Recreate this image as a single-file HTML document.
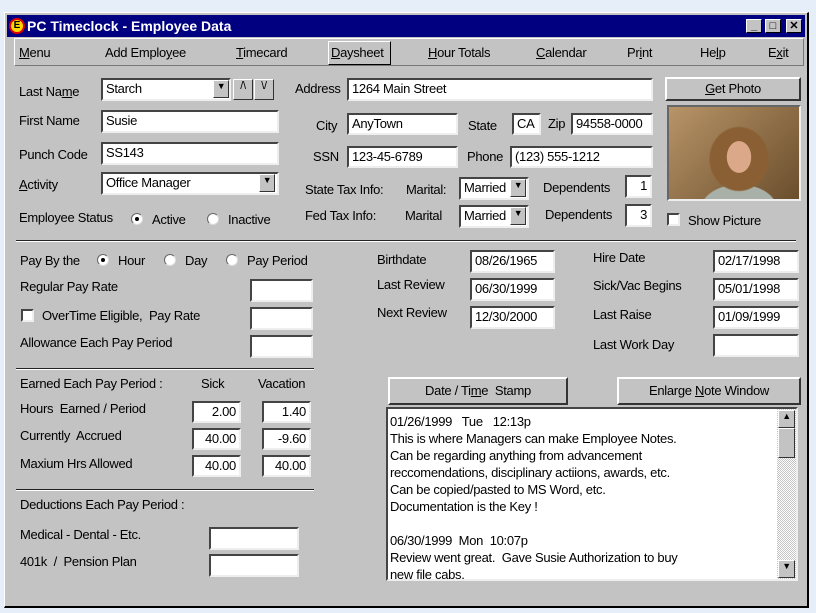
<!DOCTYPE html>
<html><head><meta charset="utf-8"><style>
*{box-sizing:border-box;margin:0;padding:0}
body{width:816px;height:613px;background:#e6eefa;position:relative;overflow:hidden;font-family:"Liberation Sans",sans-serif;font-size:13px;color:#000;letter-spacing:-0.3px}
.win{position:absolute;left:4px;top:12px;width:805px;height:596px;background:#c3c3c3;border:1px solid #fff;border-right:2px solid #000;border-bottom:2px solid #000}
.tb{position:absolute;left:2px;top:2px;right:2px;height:22px;background:#000080;color:#fff;font-weight:bold;font-size:14px;line-height:22px;padding-left:20px;letter-spacing:0}
.ic{position:absolute;left:2px;top:3px;width:16px;height:16px;border-radius:50%;background:#ffd800;border:2px solid #d00;color:#000;font-size:10px;line-height:12px;text-align:center}
.cb{position:absolute;top:4px;width:16px;height:14px;background:#c3c3c3;border:1px solid;border-color:#fff #000 #000 #fff;color:#000;font-size:11px;line-height:12px;text-align:center;font-weight:bold}
.a{position:absolute;white-space:nowrap;line-height:16px}
.f{position:absolute;background:#fff;border:2px solid;border-color:#444 #eee #eee #444;white-space:nowrap;line-height:18px;padding-left:3px;overflow:hidden}
.b{position:absolute;background:#c3c3c3;border:2px solid;border-color:#fff #333 #333 #fff;text-align:center;white-space:nowrap}
.ln{position:absolute;height:2px;background:#222;border-bottom:1px solid #fff}
.r{position:absolute;width:12px;height:12px;border-radius:50%;background:#fff;border:1px solid;border-color:#666 #ddd #ddd #666}
.r.on::after{content:"";position:absolute;left:3px;top:3px;width:4px;height:4px;border-radius:50%;background:#000}
.ck{position:absolute;width:13px;height:13px;background:#fff;border:2px solid;border-color:#444 #eee #eee #444}
.dd{position:absolute;width:16px;background:#c3c3c3;border:1px solid;border-color:#fff #333 #333 #fff;font-size:9px;text-align:center}
u{text-decoration:underline}
</style></head><body>
<div class="win">
 <div class="tb"><div class="ic">E</div>PC Timeclock - Employee Data
  <div class="cb" style="left:739px">_</div><div class="cb" style="left:758px">□</div><div class="cb" style="left:779px">✕</div>
 </div>
</div>
<!-- menu -->
<div style="position:absolute;left:14px;top:38px;width:790px;height:28px;border:1px solid;border-color:#fff #777 #777 #fff"></div>
<div class="a" style="left:19px;top:45px"><u>M</u>enu</div>
<div class="a" style="left:105px;top:45px">Add Emplo<u>y</u>ee</div>
<div class="a" style="left:236px;top:45px"><u>T</u>imecard</div>
<div style="position:absolute;left:328px;top:41px;width:63px;height:24px;border:1px solid;border-color:#fff #000 #000 #fff"></div>
<div class="a" style="left:331px;top:45px"><u>D</u>aysheet</div>
<div class="a" style="left:428px;top:45px"><u>H</u>our Totals</div>
<div class="a" style="left:536px;top:45px"><u>C</u>alendar</div>
<div class="a" style="left:627px;top:45px">Pr<u>i</u>nt</div>
<div class="a" style="left:700px;top:45px">He<u>l</u>p</div>
<div class="a" style="left:768px;top:45px">E<u>x</u>it</div>

<div class="a" style="left:19px;top:84px">Last Na<u>m</u>e</div>
<div class="f" style="left:101px;top:78px;width:130px;height:23px">Starch</div>
<div class="dd" style="left:213px;top:80px;height:18px">▼</div>
<div class="b" style="left:233px;top:79px;width:20px;height:21px;border-width:1px;font-size:11px">/\</div>
<div class="b" style="left:254px;top:79px;width:20px;height:21px;border-width:1px;font-size:11px">\/</div>
<div class="a" style="left:295px;top:81px">Address</div>
<div class="f" style="left:347px;top:78px;width:306px;height:23px">1264 Main Street</div>
<div class="b" style="left:665px;top:77px;width:136px;height:24px;line-height:19px"><u>G</u>et Photo</div>

<div class="a" style="left:19px;top:113px">First Name</div>
<div class="f" style="left:101px;top:110px;width:178px;height:23px">Susie</div>
<div class="a" style="left:316px;top:118px">City</div>
<div class="f" style="left:347px;top:113px;width:111px;height:22px">AnyTown</div>
<div class="a" style="left:468px;top:118px">State</div>
<div class="f" style="left:512px;top:113px;width:29px;height:22px">CA</div>
<div class="a" style="left:548px;top:116px">Zip</div>
<div class="f" style="left:571px;top:113px;width:82px;height:22px">94558-0000</div>
<div style="position:absolute;left:667px;top:105px;width:134px;height:96px;border:2px solid;border-color:#666 #eee #eee #666;background:radial-gradient(ellipse 20px 26px at 70px 50px,#dba98a 60%,transparent 62%),radial-gradient(ellipse 48px 52px at 70px 52px,#8a5f34 60%,transparent 63%),radial-gradient(ellipse 62px 40px at 70px 102px,#a9b0a8 60%,transparent 62%),linear-gradient(135deg,#b89468,#6a4e2c)"></div>

<div class="a" style="left:19px;top:147px">Punch Code</div>
<div class="f" style="left:101px;top:142px;width:178px;height:23px">SS143</div>
<div class="a" style="left:313px;top:149px">SSN</div>
<div class="f" style="left:347px;top:146px;width:111px;height:22px">123-45-6789</div>
<div class="a" style="left:467px;top:149px">Phone</div>
<div class="f" style="left:510px;top:146px;width:143px;height:22px">(123) 555-1212</div>

<div class="a" style="left:19px;top:177px"><u>A</u>ctivity</div>
<div class="f" style="left:101px;top:172px;width:178px;height:23px">Office Manager</div>
<div class="dd" style="left:259px;top:174px;height:18px">▼</div>
<div class="a" style="left:305px;top:182px">State Tax Info:</div>
<div class="a" style="left:406px;top:182px">Marital:</div>
<div class="f" style="left:459px;top:177px;width:70px;height:23px">Married</div>
<div class="dd" style="left:510px;top:179px;height:18px">▼</div>
<div class="a" style="left:543px;top:180px">Dependents</div>
<div class="f" style="left:625px;top:175px;width:27px;height:23px;text-align:right;padding-right:3px">1</div>

<div class="a" style="left:19px;top:210px">Employee Status</div>
<div class="r on" style="left:131px;top:213px"></div><div class="a" style="left:152px;top:212px">Active</div>
<div class="r" style="left:207px;top:213px"></div><div class="a" style="left:228px;top:212px">Inactive</div>
<div class="a" style="left:305px;top:208px">Fed Tax Info:</div>
<div class="a" style="left:405px;top:208px">Marital</div>
<div class="f" style="left:459px;top:205px;width:70px;height:23px">Married</div>
<div class="dd" style="left:510px;top:207px;height:18px">▼</div>
<div class="a" style="left:545px;top:207px">Dependents</div>
<div class="f" style="left:625px;top:204px;width:27px;height:23px;text-align:right;padding-right:3px">3</div>
<div class="ck" style="left:667px;top:213px"></div><div class="a" style="left:688px;top:213px">Show Picture</div>

<div class="ln" style="left:16px;top:240px;width:780px"></div>

<div class="a" style="left:20px;top:253px">Pay By the</div>
<div class="r on" style="left:97px;top:254px"></div><div class="a" style="left:118px;top:253px">Hour</div>
<div class="r" style="left:164px;top:254px"></div><div class="a" style="left:185px;top:253px">Day</div>
<div class="r" style="left:226px;top:254px"></div><div class="a" style="left:247px;top:253px">Pay Period</div>
<div class="a" style="left:20px;top:279px">Regular Pay Rate</div>
<div class="f" style="left:250px;top:279px;width:63px;height:23px"></div>
<div class="ck" style="left:21px;top:309px"></div><div class="a" style="left:42px;top:308px">OverTime Eligible,&nbsp; Pay Rate</div>
<div class="f" style="left:250px;top:307px;width:63px;height:23px"></div>
<div class="a" style="left:20px;top:335px">Allowance Each Pay Period</div>
<div class="f" style="left:250px;top:335px;width:63px;height:23px"></div>

<div class="a" style="left:377px;top:252px">Birthdate</div>
<div class="f" style="left:470px;top:250px;width:85px;height:23px">08/26/1965</div>
<div class="a" style="left:377px;top:277px">Last Review</div>
<div class="f" style="left:470px;top:278px;width:85px;height:23px">06/30/1999</div>
<div class="a" style="left:377px;top:305px">Next Review</div>
<div class="f" style="left:470px;top:306px;width:85px;height:23px">12/30/2000</div>

<div class="a" style="left:593px;top:250px">Hire Date</div>
<div class="f" style="left:713px;top:250px;width:86px;height:23px">02/17/1998</div>
<div class="a" style="left:593px;top:278px">Sick/Vac Begins</div>
<div class="f" style="left:713px;top:278px;width:86px;height:23px">05/01/1998</div>
<div class="a" style="left:593px;top:307px">Last Raise</div>
<div class="f" style="left:713px;top:306px;width:86px;height:23px">01/09/1999</div>
<div class="a" style="left:593px;top:337px">Last Work Day</div>
<div class="f" style="left:713px;top:334px;width:86px;height:23px"></div>

<div class="ln" style="left:16px;top:368px;width:298px"></div>
<div class="a" style="left:20px;top:376px">Earned Each Pay Period :</div>
<div class="a" style="left:201px;top:376px">Sick</div>
<div class="a" style="left:258px;top:376px">Vacation</div>
<div class="a" style="left:20px;top:401px">Hours&nbsp; Earned / Period</div>
<div class="f" style="left:192px;top:401px;width:49px;height:22px;text-align:right;padding-right:3px">2.00</div>
<div class="f" style="left:262px;top:401px;width:49px;height:22px;text-align:right;padding-right:3px">1.40</div>
<div class="a" style="left:20px;top:428px">Currently&nbsp; Accrued</div>
<div class="f" style="left:192px;top:428px;width:49px;height:22px;text-align:right;padding-right:3px">40.00</div>
<div class="f" style="left:262px;top:428px;width:49px;height:22px;text-align:right;padding-right:3px">-9.60</div>
<div class="a" style="left:20px;top:456px">Maxium Hrs Allowed</div>
<div class="f" style="left:192px;top:455px;width:49px;height:22px;text-align:right;padding-right:3px">40.00</div>
<div class="f" style="left:262px;top:455px;width:49px;height:22px;text-align:right;padding-right:3px">40.00</div>

<div class="ln" style="left:16px;top:489px;width:298px"></div>
<div class="a" style="left:20px;top:497px">Deductions Each Pay Period :</div>
<div class="a" style="left:20px;top:527px">Medical - Dental - Etc.</div>
<div class="f" style="left:209px;top:527px;width:90px;height:23px"></div>
<div class="a" style="left:20px;top:554px">401k&nbsp; /&nbsp; Pension Plan</div>
<div class="f" style="left:209px;top:554px;width:90px;height:23px"></div>

<div class="b" style="left:388px;top:377px;width:180px;height:28px;line-height:24px">Date / Ti<u>m</u>e&nbsp; Stamp</div>
<div class="b" style="left:617px;top:377px;width:184px;height:28px;line-height:24px">Enlarge <u>N</u>ote Window</div>
<div class="f" style="left:386px;top:407px;width:412px;height:174px;line-height:17px;padding:4px 0 0 2px;white-space:pre">01/26/1999   Tue   12:13p
This is where Managers can make Employee Notes.
Can be regarding anything from advancement
reccomendations, disciplinary actiions, awards, etc.
Can be copied/pasted to MS Word, etc.
Documentation is the Key !

06/30/1999  Mon  10:07p
Review went great.  Gave Susie Authorization to buy
new file cabs.</div>
<div style="position:absolute;left:777px;top:409px;width:19px;height:170px;background:repeating-conic-gradient(#fff 0 25%,#c3c3c3 0 50%) 0 0/2px 2px"></div>
<div class="dd" style="left:778px;top:410px;height:18px;width:17px">▲</div>
<div class="dd" style="left:778px;top:428px;height:30px;width:17px"></div>
<div class="dd" style="left:778px;top:560px;height:18px;width:17px">▼</div>
</body></html>
